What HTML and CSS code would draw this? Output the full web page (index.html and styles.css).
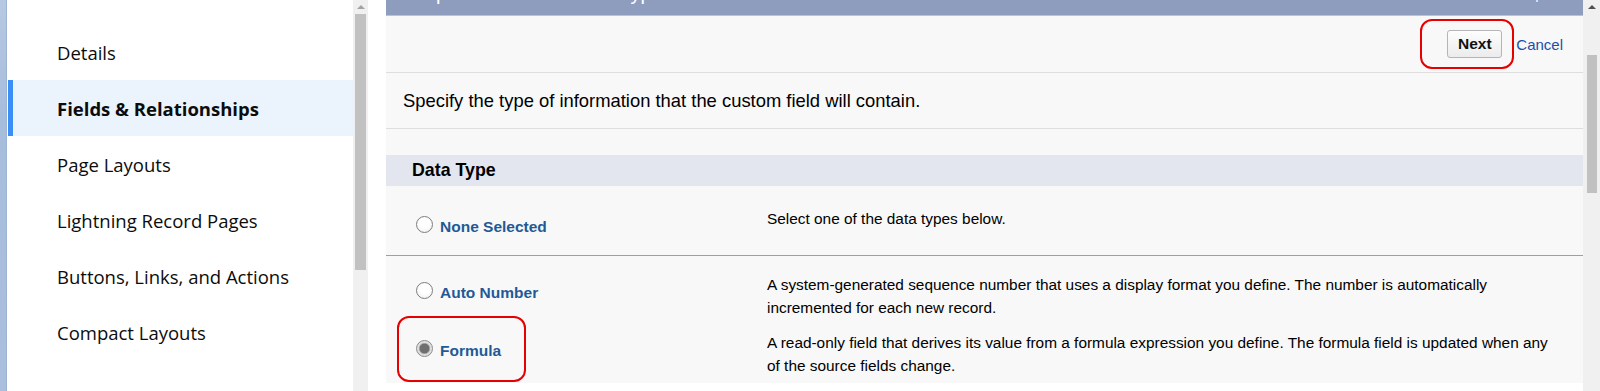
FILE: index.html
```html
<!DOCTYPE html>
<html lang="en">
<head>
    <meta charset="UTF-8">
    <title>New Custom Field</title>
    <link rel="stylesheet" href="styles.css">
</head>
<body>
    <div class="page">
        <div class="backdrop"></div>

        <nav class="sidebar">
            <ul class="nav-list">
                <li class="nav-item">Details</li>
                <li class="nav-item active">Fields &amp; Relationships</li>
                <li class="nav-item">Page Layouts</li>
                <li class="nav-item">Lightning Record Pages</li>
                <li class="nav-item">Buttons, Links, and Actions</li>
                <li class="nav-item">Compact Layouts</li>
            </ul>
        </nav>
        <div class="scrollbar side-scroll">
            <span class="arrow"></span>
            <span class="thumb"></span>
        </div>

        <div class="spacer"></div>

        <main class="wizard">
            <div class="title-bar">
                <span class="title">Step 1. Choose the field type</span>
                <span class="step">Step 1 of 4</span>
            </div>
            <div class="button-row">
                <div class="next-wrap">
                    <button class="btn">Next</button>
                    <span class="mark mark-next"></span>
                </div>
                <a class="cancel" href="#">Cancel</a>
            </div>
            <div class="intro">Specify the type of information that the custom field will contain.</div>

            <h3 class="section-head">Data Type</h3>

            <div class="type-row first">
                <label class="type-label"><input type="radio" name="type"><span>None Selected</span></label>
                <div class="type-desc">Select one of the data types below.</div>
            </div>
            <div class="type-row">
                <label class="type-label"><input type="radio" name="type"><span>Auto Number</span></label>
                <div class="type-desc">A system-generated sequence number that uses a display format you define. The number is automatically<br>incremented for each new record.</div>
            </div>
            <div class="type-row last">
                <label class="type-label"><input type="radio" name="type" checked><span>Formula</span><span class="mark mark-formula"></span></label>
                <div class="type-desc">A read-only field that derives its value from a formula expression you define. The formula field is updated when any<br>of the source fields change.</div>
            </div>
        </main>

        <div class="scrollbar page-scroll">
            <span class="arrow"></span>
            <span class="thumb"></span>
        </div>
    </div>
</body>
</html>
```

FILE: styles.css
```css
:root {
    --panel-bg: #f8f8f8;
    --line: #dedede;
    --link: #1f5a96;
    --mark: #e60000;
}

* {
    margin: 0;
    padding: 0;
    box-sizing: border-box;
}

body {
    width: 1600px;
    height: 391px;
    overflow: hidden;
    background: #fff;
    font-family: 'Liberation Sans', Arial, sans-serif;
    color: #000;
}

.page {
    display: flex;
    height: 391px;
}

.backdrop {
    width: 7px;
    background: linear-gradient(160deg, #b7c9e2 0%, #a7bddc 30%, #a9bfdd 100%);
    border-right: 1px solid #9fb4d2;
}

/* left setup menu */
.sidebar {
    width: 346px;
    background: #fff;
    padding-top: 24px;
}

.nav-list {
    list-style: none;
}

.nav-item {
    height: 56px;
    display: flex;
    align-items: center;
    padding-left: 50px;
    font-family: 'Open Sans', 'Noto Sans', sans-serif;
    font-size: 18.5px;
    color: #0c0c0c;
}

.nav-item.active {
    background: #ebf3fd;
    border-left: 5px solid #3a8ef6;
    margin-left: 1px;
    padding-left: 44px;
    font-weight: 700;
}

.scrollbar {
    background: #f0f0f0;
    display: flex;
    flex-direction: column;
    align-items: center;
}

.side-scroll {
    width: 15px;
}

.scrollbar .arrow {
    margin-top: 5px;
    width: 0;
    height: 0;
    border-left: 4px solid transparent;
    border-right: 4px solid transparent;
    border-bottom: 4px solid #a3a3a3;
}

.side-scroll .thumb {
    margin-top: 5px;
    width: 11px;
    height: 256px;
    background: #c1c1c1;
}

.page-scroll {
    width: 17px;
}

.page-scroll .arrow {
    border-bottom-color: #505050;
}

.page-scroll .thumb {
    margin-top: 46px;
    width: 10px;
    height: 138px;
    background: #c1c1c1;
}

.spacer {
    width: 18px;
}

/* wizard panel */
.wizard {
    width: 1197px;
    height: 383px;
    background: var(--panel-bg);
}

.title-bar {
    height: 16px;
    background: #8e9dbe;
    border-bottom: 1px solid #b9c2d6;
    overflow: hidden;
    display: flex;
    align-items: flex-start;
    justify-content: space-between;
    padding: 0 4px 0 20px;
    color: #fff;
}

.title {
    font-size: 20px;
    line-height: 20px;
    margin-top: -17px;
}

.step {
    font-size: 13px;
    line-height: 13px;
    margin-top: -12px;
}

.button-row {
    height: 57px;
    display: flex;
    align-items: center;
    justify-content: flex-end;
    padding-right: 20px;
    border-bottom: 1px solid var(--line);
}

.next-wrap {
    position: relative;
}

.btn {
    width: 55px;
    height: 28px;
    font-family: inherit;
    font-size: 15.5px;
    font-weight: 700;
    color: #111;
    background: linear-gradient(#fdfdfd, #ececec);
    border: 1px solid #b5b5b5;
    border-radius: 3px;
}

.cancel {
    margin-left: 14px;
    font-size: 15px;
    color: #1d4fa8;
    text-decoration: none;
}

.mark {
    position: absolute;
    border: 2px solid var(--mark);
    border-radius: 12px;
}

.mark-next {
    left: -27px;
    top: -11px;
    width: 94px;
    height: 50px;
}

.intro {
    height: 56px;
    display: flex;
    align-items: center;
    padding-left: 17px;
    font-size: 18.4px;
    border-bottom: 1px solid var(--line);
}

.section-head {
    margin-top: 26px;
    height: 31px;
    display: flex;
    align-items: center;
    padding-left: 26px;
    background: #e3e6ef;
    font-size: 17.8px;
    font-weight: 700;
}

.type-row {
    display: grid;
    grid-template-columns: 381px 1fr;
    padding-top: 17px;
}

.type-row.first {
    padding-top: 21px;
    padding-bottom: 17px;
    border-bottom: 1px solid #8fa0c6;
}

.type-row.last {
    padding-top: 12px;
}

.type-label {
    display: flex;
    align-items: center;
    gap: 7px;
    padding-left: 30px;
    padding-top: 8px;
    height: 31px;
    font-size: 15.5px;
    font-weight: 700;
    color: var(--link);
    position: relative;
}

.type-label input {
    appearance: none;
    width: 17px;
    height: 17px;
    margin-top: -5px;
    border: 1px solid #7e7e7e;
    border-radius: 50%;
    background: radial-gradient(circle at 50% 40%, #fff 40%, #ececec 100%);
}

.type-label input:checked {
    border-color: #8a8a8a;
    background: radial-gradient(circle, #6f6f6f 0 4.5px, #9c9c9c 5px, #dcdcdc 6px, #f2f2f2 100%);
}

.mark-formula {
    left: 11px;
    top: -15px;
    width: 129px;
    height: 66px;
}

.type-desc {
    font-size: 15.4px;
    line-height: 23px;
}
```
